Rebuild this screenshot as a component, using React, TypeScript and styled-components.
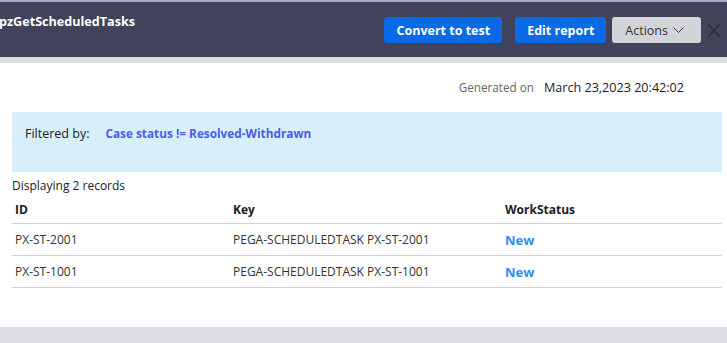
import styled, { createGlobalStyle } from 'styled-components'

const GlobalStyle = createGlobalStyle`
    html, body {
        margin: 0;
        padding: 0;
        background: #ffffff;
    }
    body {
        font-family: "Open Sans", "Noto Sans", sans-serif;
        color: #222;
    }
`

const Page = styled.div`
    width: 727px;
    height: 343px;
    overflow: hidden;
    display: flex;
    flex-direction: column;
    background: #fff;
`

const Header = styled.header`
    height: 55px;
    border-top: 2px solid #a3a9bf;
    background: #41435a;
    display: flex;
    align-items: flex-start;
    flex-shrink: 0;
`

const Title = styled.h1`
    margin: 11px 0 0 -1px;
    font-size: 12.6px;
    font-weight: 700;
    color: #fff;
    flex: 1;
`

const Toolbar = styled.div`
    display: flex;
    align-items: center;
    margin: 15px 7px 0 0;
`

const ActionButton = styled.button<{ $secondary?: boolean; $gap?: number }>`
    height: 26px;
    margin-left: ${p => p.$gap ?? 0}px;
    padding: ${p => (p.$secondary ? '0 17px 0 13px' : '0 12px')};
    border: none;
    border-radius: 3px;
    font-family: inherit;
    font-size: 12.5px;
    font-weight: ${p => (p.$secondary ? 400 : 700)};
    color: ${p => (p.$secondary ? '#333' : '#fff')};
    background: ${p => (p.$secondary ? '#d3d4d8' : '#0a69e6')};
    display: flex;
    align-items: center;
    gap: 5px;
`

const CloseButton = styled.span`
    display: flex;
    margin-left: 7px;
`

const Strip = styled.div`
    height: 6px;
    background: #dcdde2;
    flex-shrink: 0;
`

const Content = styled.main`
    flex: 1;
    padding: 0 5px 0 12px;
`

const GeneratedRow = styled.div`
    display: flex;
    justify-content: flex-end;
    align-items: baseline;
    gap: 10px;
    padding: 16px 38px 0 0;
    height: 33px;
    box-sizing: border-box;
`

const Muted = styled.span`
    font-size: 11.7px;
    color: #666;
`

const DateText = styled.span`
    font-size: 12.6px;
    color: #1c1c2a;
`

const FilterBox = styled.div`
    margin-top: 16px;
    height: 60px;
    background: #d7effa;
    display: flex;
    align-items: baseline;
    gap: 16px;
    padding: 13px 0 0 13px;
    box-sizing: border-box;
    font-size: 12.5px;
`

const FilterLink = styled.span`
    font-size: 11.8px;
    font-weight: 700;
    color: #4a5bef;
`

const Count = styled.div`
    margin-top: 5px;
    font-size: 12px;
    color: #222;
`

const Table = styled.div`
    margin-top: 1px;
`

const Row = styled.div<{ $head?: boolean }>`
    display: grid;
    grid-template-columns: 218px 272px 1fr;
    align-items: center;
    box-sizing: border-box;
    height: ${p => (p.$head ? '29px' : '32px')};
    border-bottom: 1px solid #cfcfd1;
    font-size: 12px;
    font-weight: ${p => (p.$head ? 700 : 400)};
    color: ${p => (p.$head ? '#1c1c2a' : '#333')};
    & > * {
        padding-left: 3px;
    }
`

const Status = styled.span`
    font-weight: 700;
    font-size: 13px;
    color: #2e8df2;
`

const Footer = styled.div`
    height: 16px;
    background: #dcdde2;
    flex-shrink: 0;
`

const rows = [
    { id: 'PX-ST-2001', key: 'PEGA-SCHEDULEDTASK PX-ST-2001', status: 'New' },
    { id: 'PX-ST-1001', key: 'PEGA-SCHEDULEDTASK PX-ST-1001', status: 'New' },
]

function App() {
    return (
        <Page>
            <GlobalStyle />
            <Header>
                <Title>pzGetScheduledTasks</Title>
                <Toolbar>
                    <ActionButton>Convert to test</ActionButton>
                    <ActionButton $gap={13}>Edit report</ActionButton>
                    <ActionButton $secondary $gap={6}>
                        Actions
                        <svg width="11" height="6" viewBox="0 0 11 6" fill="none" stroke="#333" strokeWidth="1">
                            <path d="M0.5 0.5l5 5 5-5" />
                        </svg>
                    </ActionButton>
                    <CloseButton>
                        <svg width="12" height="13" viewBox="0 0 12 13" stroke="#2a2a2a" strokeWidth="1.2">
                            <path d="M0.5 0.5l11 12M11.5 0.5l-11 12" />
                        </svg>
                    </CloseButton>
                </Toolbar>
            </Header>
            <Strip />
            <Content>
                <GeneratedRow>
                    <Muted>Generated on</Muted>
                    <DateText>March 23,2023 20:42:02</DateText>
                </GeneratedRow>
                <FilterBox>
                    <span>Filtered by:</span>
                    <FilterLink>Case status != Resolved-Withdrawn</FilterLink>
                </FilterBox>
                <Count>Displaying 2 records</Count>
                <Table>
                    <Row $head>
                        <span>ID</span>
                        <span>Key</span>
                        <span>WorkStatus</span>
                    </Row>
                    {rows.map(r => (
                        <Row key={r.id}>
                            <span>{r.id}</span>
                            <span>{r.key}</span>
                            <Status>{r.status}</Status>
                        </Row>
                    ))}
                </Table>
            </Content>
            <Footer />
        </Page>
    )
}

export default App
